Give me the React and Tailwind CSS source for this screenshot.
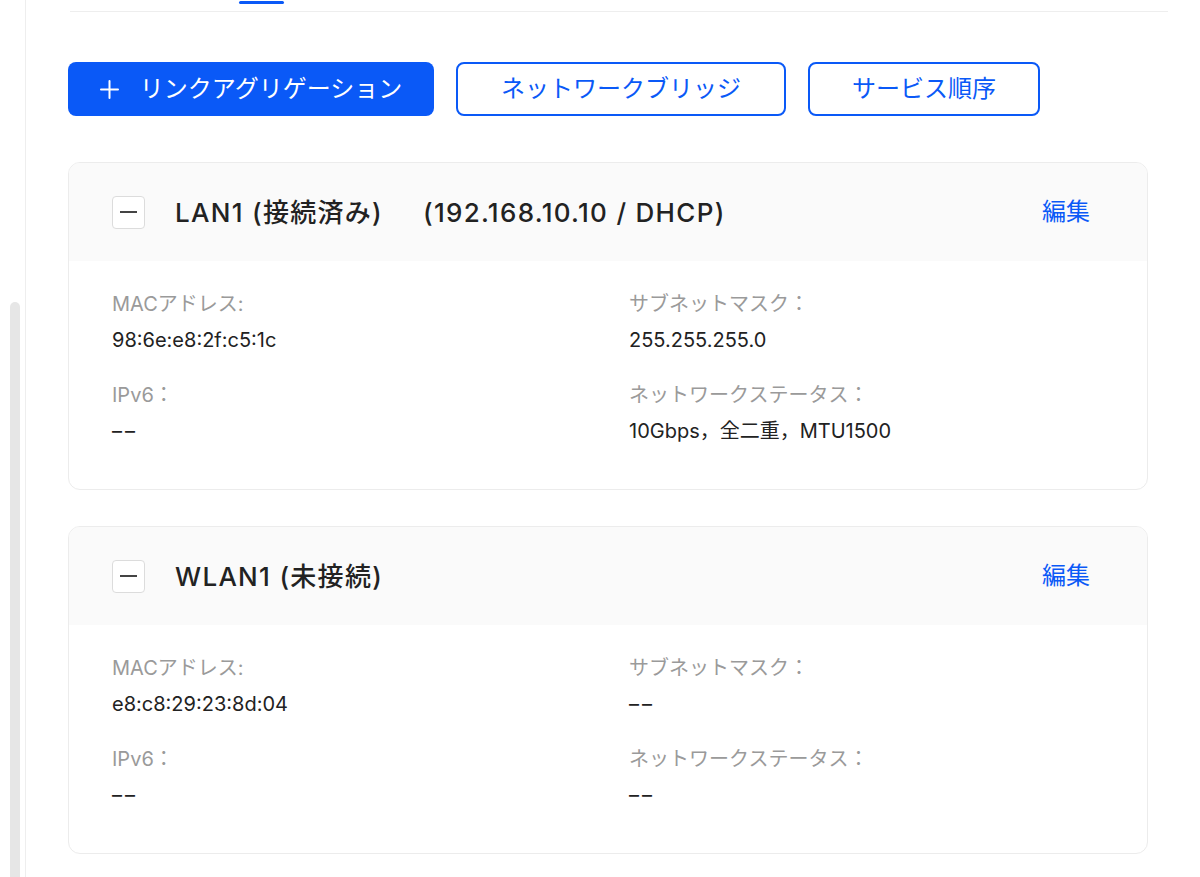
import React from 'react';

const font = { fontFamily: 'Inter, "Noto Sans CJK JP", sans-serif' };

const interfaces = [
  {
    id: 'lan1',
    name: 'LAN1 (接続済み)',
    addr: '(192.168.10.10 / DHCP)',
    mac: '98:6e:e8:2f:c5:1c',
    mask: '255.255.255.0',
    ipv6: '––',
    status: '10Gbps，全二重，MTU1500',
  },
  {
    id: 'wlan1',
    name: 'WLAN1 (未接続)',
    addr: null,
    mac: 'e8:c8:29:23:8d:04',
    mask: '––',
    ipv6: '––',
    status: '––',
  },
];

function Field({ label, value }) {
  const empty = value === '––';
  return (
    <div>
      <p className="text-[20px] leading-7 text-[#9a9a9a]">{label}</p>
      <p className={`text-[20px] leading-7 text-[#222] mt-2 ${empty ? 'tracking-[3px]' : ''}`}>{value}</p>
    </div>
  );
}

function InterfaceCard({ item }) {
  return (
    <div className="rounded-xl border border-[#ececec] overflow-hidden bg-white">
      {/* Header */}
      <div className="h-[98px] bg-[#fafafa] flex items-center pl-[43px] pr-[57px]">
        <div className="w-[33px] h-[33px] rounded-[4px] border border-[#dcdcdc] bg-white flex items-center justify-center flex-shrink-0">
          <div className="w-[17px] h-[2px] bg-[#444]" />
        </div>
        <h2 className="ml-[30px] text-[26px] tracking-[0.05em] font-medium text-[#222] flex-1">
          {item.name}
          {item.addr && <span className="ml-[40px]">{item.addr}</span>}
        </h2>
        <button className="text-[24px] text-[#0a59f7]">編集</button>
      </div>

      {/* Details */}
      <div className="grid grid-cols-[517px_1fr] gap-y-[27px] pl-[43px] pt-[29px] pb-[44px]">
        <Field label="MACアドレス:" value={item.mac} />
        <Field label="サブネットマスク：" value={item.mask} />
        <Field label="IPv6：" value={item.ipv6} />
        <Field label="ネットワークステータス：" value={item.status} />
      </div>
    </div>
  );
}

export default function App() {
  return (
    <div className="min-h-screen h-[877px] overflow-hidden bg-white flex" style={font}>
      {/* Left rail with scrollbar */}
      <div className="w-[26px] border-r border-[#eeeeee] flex-shrink-0 pl-[10px] pt-[302px]">
        <div className="w-[10px] h-full rounded-t-full bg-[#e6e6e6]" />
      </div>

      <main className="flex-1 pl-[42px] pr-[32px]">
        {/* Tabs remnant */}
        <div className="relative h-[12px] border-b border-[#eeeeee] ml-[2px]">
          <div className="absolute left-[169px] top-[1px] w-[45px] h-[3px] rounded-full bg-[#0a59f7]" />
        </div>

        {/* Actions */}
        <div className="flex gap-[22px] mt-[50px]">
          <button className="w-[366px] h-[54px] rounded-lg bg-[#0a59f7] text-white text-[24px] flex items-center justify-center">
            <svg width="19" height="19" viewBox="0 0 19 19" className="mr-[21px]">
              <path d="M9.5 1v17M1 9.5h17" stroke="currentColor" strokeWidth="2" strokeLinecap="round" />
            </svg>
            リンクアグリゲーション
          </button>
          <button className="w-[330px] h-[54px] rounded-lg border-2 border-[#0a59f7] text-[#0a59f7] text-[24px]">
            ネットワークブリッジ
          </button>
          <button className="w-[232px] h-[54px] rounded-lg border-2 border-[#0a59f7] text-[#0a59f7] text-[24px]">
            サービス順序
          </button>
        </div>

        {/* Interfaces */}
        <div className="mt-[46px] mr-[20px] flex flex-col gap-[36px]">
          {interfaces.map((item) => (
            <InterfaceCard key={item.id} item={item} />
          ))}
        </div>
      </main>
    </div>
  );
}
